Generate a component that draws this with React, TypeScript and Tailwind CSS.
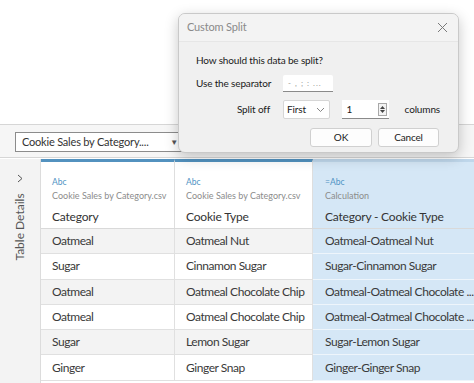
import React from 'react';

const rows = [
  ['Oatmeal', 'Oatmeal Nut', 'Oatmeal-Oatmeal Nut'],
  ['Sugar', 'Cinnamon Sugar', 'Sugar-Cinnamon Sugar'],
  ['Oatmeal', 'Oatmeal Chocolate Chip', 'Oatmeal-Oatmeal Chocolate ...'],
  ['Oatmeal', 'Oatmeal Chocolate Chip', 'Oatmeal-Oatmeal Chocolate ...'],
  ['Sugar', 'Lemon Sugar', 'Sugar-Lemon Sugar'],
  ['Ginger', 'Ginger Snap', 'Ginger-Ginger Snap'],
];

function CustomSplitDialog() {
  return (
    <div className="absolute left-[178px] top-[13px] w-[281px] h-[140px] rounded-[7px] border border-[#c9c9c9] bg-[#f0f0f0] shadow-[0_4px_14px_rgba(0,0,0,0.22)] overflow-hidden font-['Lato',sans-serif] text-[10px] tracking-[-0.15px] text-[#1a1a1a]">
      {/* title bar */}
      <div className="h-[28px] flex items-center justify-between pl-[8px] pr-[10px] bg-[#f3f3f3] border-b border-[#e6e6e6]">
        <span className="text-[11px] text-[#8a8a8a]">Custom Split</span>
        <svg width="11" height="11" viewBox="0 0 11 11" className="text-[#7a7a7a]">
          <path d="M1 1 L10 10 M10 1 L1 10" stroke="currentColor" strokeWidth="1" fill="none" />
        </svg>
      </div>
      <div className="pl-[17px] pr-[18px] pt-[10px]">
        <div className="h-[16px] leading-[16px] whitespace-nowrap">How should this data be split?</div>
        <div className="mt-[6px] flex items-center h-[18px]">
          <span className="w-[87px] shrink-0 whitespace-nowrap">Use the separator</span>
          <div className="w-[50px] h-[17px] bg-white border-b border-[#8a8a8a] rounded-t-[2px] flex items-center px-[5px] text-[8px] text-[#9a9a9a] tracking-[1px] whitespace-nowrap">
            - , ; : ...
          </div>
        </div>
        <div className="mt-[8px] flex items-center h-[19px]">
          <span className="w-[87px] shrink-0 text-right pr-[13px] whitespace-nowrap">Split off</span>
          <div className="w-[50px] h-[19px] bg-white border border-[#d6d6d6] rounded-[2px] flex items-center justify-between pl-[3px] pr-[4px]">
            <span>First</span>
            <svg width="9" height="6" viewBox="0 0 9 6">
              <path d="M1 1 L4.5 4.5 L8 1" stroke="#777" strokeWidth="0.9" fill="none" />
            </svg>
          </div>
          <div className="ml-[12px] w-[49px] h-[19px] bg-white border-b border-[#8a8a8a] flex items-center justify-between pl-[4px] pr-[2px]">
            <span>1</span>
            <div className="w-[9px] h-[13px] border border-[#a8a8a8] bg-[#f4f4f4] flex flex-col items-center justify-center gap-[1px]">
              <svg width="5" height="3" viewBox="0 0 5 3"><path d="M0 3 L2.5 0 L5 3 Z" fill="#444" /></svg>
              <svg width="5" height="3" viewBox="0 0 5 3"><path d="M0 0 L2.5 3 L5 0 Z" fill="#444" /></svg>
            </div>
          </div>
          <span className="ml-[16px] whitespace-nowrap">columns</span>
        </div>
        <div className="mt-[9px] flex justify-end gap-[6px] pr-[1px]">
          <button className="w-[62px] h-[19px] bg-[#fdfdfd] border border-[#d0d0d0] rounded-[3px]">OK</button>
          <button className="w-[61px] h-[19px] bg-[#fdfdfd] border border-[#d0d0d0] rounded-[3px]">Cancel</button>
        </div>
      </div>
    </div>
  );
}

export default function App() {
  return (
    <div className="relative w-[474px] h-[383px] overflow-hidden bg-white font-['Lato',sans-serif] text-[#333]">
      <div className="h-[124px] bg-white" />

      {/* data source toolbar */}
      <div className="h-[34px] bg-[#f6f6f6] border-t border-b border-[#d6d6d6] pl-[15px] pt-[7px]">
        <div className="w-[167px] h-[20px] bg-white border border-[#8c8c8c] flex items-center justify-between pl-[6px] pr-[3px] text-[11px] tracking-[-0.2px] text-[#333] whitespace-nowrap">
          <span>Cookie Sales by Category....</span>
          <span className="text-[8px] text-[#555]">▼</span>
        </div>
      </div>

      <div className="flex h-[225px] mt-[1px]">
        {/* side tab */}
        <div className="w-[41px] shrink-0 bg-[#f3f3f3] border-r border-[#dcdcdc] flex flex-col items-center pt-[15px]">
          <svg width="6" height="9" viewBox="0 0 6 9">
            <path d="M1 1 L5 4.5 L1 8" stroke="#555" strokeWidth="1" fill="none" />
          </svg>
          <div className="mt-[8px] h-[72px] w-[16px] flex items-center justify-center">
            <span className="-rotate-90 whitespace-nowrap text-[12px] text-[#555]">Table Details</span>
          </div>
        </div>

        {/* data grid */}
        <div className="flex-1 min-w-0 flex flex-col">
          <div className="flex h-[70px] border-b border-[#d9d9d9]">
            <div className="w-[134px] shrink-0 border-t-[3px] border-t-[#5392bf] border-r border-r-[#dedede] pl-[11px] pt-[14px] whitespace-nowrap overflow-hidden">
              <div className="text-[8.5px] text-[#4f93c4] leading-[12px]">Abc</div>
              <div className="text-[9px] text-[#8c8c8c] leading-[14px] mt-[1px]">Cookie Sales by Category.csv</div>
              <div className="text-[12px] tracking-[-0.2px] text-[#333] leading-[18px] mt-[5px]">Category</div>
            </div>
            <div className="w-[138px] shrink-0 border-t-[3px] border-t-[#5392bf] border-r border-r-[#dedede] pl-[11px] pt-[14px] whitespace-nowrap overflow-hidden">
              <div className="text-[8.5px] text-[#4f93c4] leading-[12px]">Abc</div>
              <div className="text-[9px] text-[#8c8c8c] leading-[14px] mt-[1px]">Cookie Sales by Category.csv</div>
              <div className="text-[12px] tracking-[-0.2px] text-[#333] leading-[18px] mt-[5px]">Cookie Type</div>
            </div>
            <div className="flex-1 min-w-0 border-t-[3px] border-t-[#bfd7eb] bg-[#d5e7f6] pl-[12px] pt-[14px] whitespace-nowrap overflow-hidden">
              <div className="text-[8.5px] text-[#4f93c4] leading-[12px]">=Abc</div>
              <div className="text-[9px] text-[#8c8c8c] leading-[14px] mt-[1px]">Calculation</div>
              <div className="text-[12px] tracking-[-0.2px] text-[#333] leading-[18px] mt-[5px]">Category - Cookie Type</div>
            </div>
          </div>
          {rows.map((r, i) => (
            <div key={i} className="flex h-[25.3px] shrink-0 text-[12px] tracking-[-0.45px] text-[#3a3a3a]">
              <div className={`w-[134px] shrink-0 border-r border-b border-[#e0e0e0] pl-[11px] flex items-center ${i % 2 === 0 ? 'bg-[#f3f3f3]' : 'bg-white'}`}>
                {r[0]}
              </div>
              <div className={`w-[138px] shrink-0 border-r border-b border-[#e0e0e0] pl-[11px] flex items-center whitespace-nowrap overflow-hidden ${i % 2 === 0 ? 'bg-[#f3f3f3]' : 'bg-white'}`}>
                {r[1]}
              </div>
              <div className="flex-1 min-w-0 bg-[#d5e7f6] border-b border-[#eef5fb] pl-[12px] flex items-center whitespace-nowrap overflow-hidden">
                {r[2]}
              </div>
            </div>
          ))}
        </div>
      </div>

      <CustomSplitDialog />
    </div>
  );
}
